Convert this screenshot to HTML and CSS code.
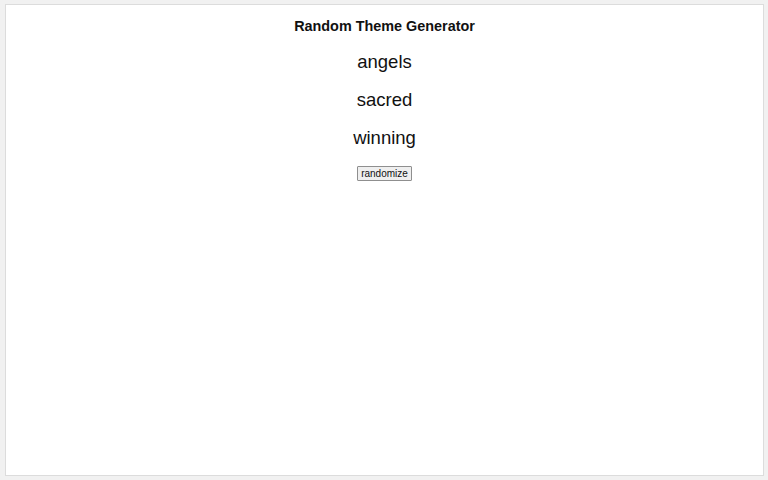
FILE: index.html
```html
<!DOCTYPE html>
<html lang="en">
<head>
    <meta charset="UTF-8">
    <title>Random Theme Generator</title>
    <link rel="stylesheet" href="styles.css">
</head>
<body>
    <div class="frame">
        <h1>Random Theme Generator</h1>
        <div class="words">
            <p class="word">angels</p>
            <p class="word">sacred</p>
            <p class="word">winning</p>
        </div>
        <button type="button" class="randomize">randomize</button>
    </div>
</body>
</html>
```
FILE: styles.css
```css
html, body {
    margin: 0;
    height: 100%;
}
body {
    font-family: "Liberation Sans", Arial, sans-serif;
    background-color: #f1f1f1;
    padding: 4px 4px 4px 5px;
    box-sizing: border-box;
}
.frame {
    background: white;
    border: 1px solid #dcdcdc;
    height: 100%;
    box-sizing: border-box;
    text-align: center;
    padding-top: 13px;
}
h1 {
    font-size: 14.4px;
    margin: 0 0 16px;
    color: #111;
}
.words {
    display: flex;
    flex-direction: column;
    align-items: center;
    gap: 15px;
}
.word {
    margin: 0;
    font-size: 18.5px;
    line-height: 23px;
    color: #111;
}
.randomize {
    margin-top: 17px;
    font-family: "Liberation Sans", Arial, sans-serif;
    font-size: 10px;
    padding: 1px 3px;
    background: #efefef;
    border: 1px solid #8f8f8f;
    border-radius: 1px;
    color: #111;
}
```
